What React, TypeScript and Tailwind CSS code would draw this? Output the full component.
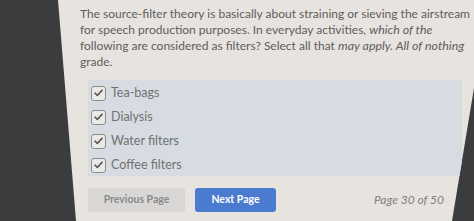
import React from 'react';

const options = ['Tea-bags', 'Dialysis', 'Water filters', 'Coffee filters'];

const CheckBox: React.FC = () => (
    <span className="w-[15px] h-[15px] rounded-[3px] border border-[#8c8c8c] bg-[#eceae6] flex items-center justify-center shrink-0">
        <svg width="9" height="8" viewBox="0 0 9 8">
            <path d="M1 4.2 L3.4 6.4 L8 1.4" fill="none" stroke="#5a5a5a" strokeWidth="1.6" strokeLinecap="round" strokeLinejoin="round" />
        </svg>
    </span>
);

export default function App() {
    return (
        <div className="w-[474px] h-[221px] overflow-hidden bg-[#3b3c3e]" style={{ fontFamily: 'Lato, "Open Sans", sans-serif' }}>
            <div className="w-full h-full bg-[#e7e3de] pl-[80px] pr-[6px] pt-[6px] [clip-path:polygon(58px_0,474px_0,474px_88px,452px_221px,76px_221px)]">
                {/* Question */}
                <p className="text-[12px] leading-[16px] text-[#5e5e5e] whitespace-nowrap">
                    The source-filter theory is basically about straining or sieving the airstream<br />
                    for speech production purposes. In everyday activities, <i className="text-[12.4px]">which of the</i><br />
                    following are considered as filters? Select all that <i className="text-[12.4px]">may apply. All of nothing</i><br />
                    grade.
                </p>

                {/* Answers */}
                <div className="mt-[10px] ml-[8px] mr-[6px] h-[96px] bg-[#d6dce1] pl-[3px] pt-[5px] flex flex-col gap-[8px]">
                    {options.map(opt => (
                        <div key={opt} className="flex items-center gap-[5px] h-[16px]">
                            <CheckBox />
                            <span className="text-[12.5px] text-[#727272]">{opt}</span>
                        </div>
                    ))}
                </div>

                {/* Footer */}
                <div className="mt-[12px] ml-[8px] flex items-center">
                    <button className="w-[97px] h-[24px] bg-[#d8d7d5] text-[#8a8a8a] text-[10.5px] font-bold rounded-[2px]">Previous Page</button>
                    <button className="ml-[10px] w-[81px] h-[24px] bg-[#4b7bcf] text-white text-[10.5px] font-bold rounded-[3px]">Next Page</button>
                    <span className="ml-auto mr-[24px] text-[12px] italic text-[#808080]">Page 30 of 50</span>
                </div>
            </div>
        </div>
    );
}
